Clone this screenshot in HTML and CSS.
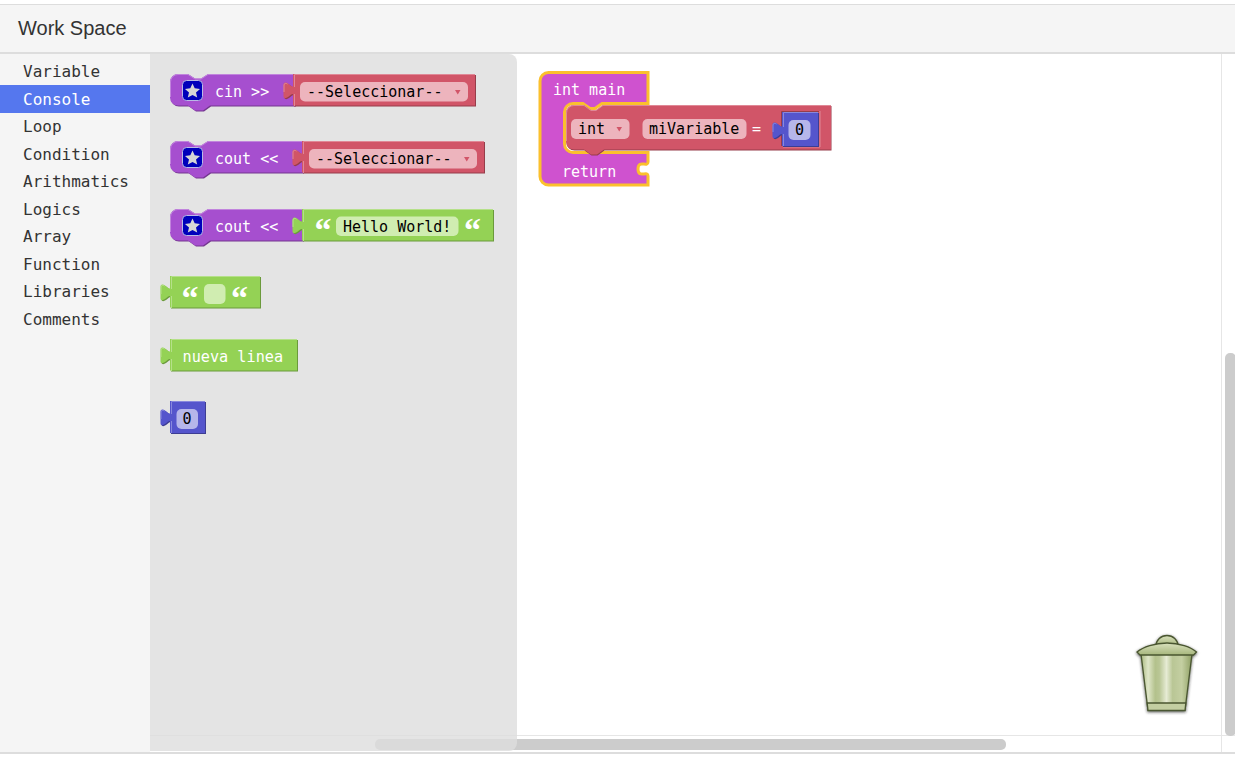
FILE: index.html
```html
<!DOCTYPE html>
<html lang="es">
<head>
<meta charset="utf-8">
<title>Work Space</title>
<link rel="stylesheet" href="styles.css">
</head>
<body>
<main class="panel">
  <header class="panel-heading">Work Space</header>
  <div class="panel-body">
    <nav class="toolbox">
      <div class="cat">Variable</div>
      <div class="cat cat-active">Console</div>
      <div class="cat">Loop</div>
      <div class="cat">Condition</div>
      <div class="cat">Arithmatics</div>
      <div class="cat">Logics</div>
      <div class="cat">Array</div>
      <div class="cat">Function</div>
      <div class="cat">Libraries</div>
      <div class="cat">Comments</div>
    </nav>
    <section class="workspace">
      <div class="track-h"></div>
      <div class="track-v"></div>
      <div class="thumb-h"></div>
      <div class="thumb-v"></div>
      <div class="flyout"></div>
      <svg class="canvas" width="1085" height="698" viewBox="150 54 1085 698" xmlns="http://www.w3.org/2000/svg">
        <defs>
          <path id="pu1" d="M170 82a8 8 0 0 1 8-8h10l7 4.500h6l7-4.500H295V105.500H210l-7 5h-8l-7-5H178a8 8 0 0 1-8-8z"/>
          <path id="pu2" d="M170 149a8 8 0 0 1 8-8h10l7 4.500h6l7-4.500H303V172.500H210l-7 5h-8l-7-5H178a8 8 0 0 1-8-8z"/>
          <path id="pu3" d="M170 217a8 8 0 0 1 8-8h10l7 4.500h6l7-4.500H303V240.500H210l-7 5h-8l-7-5H178a8 8 0 0 1-8-8z"/>
          <path id="re1" d="M293 74H475V105.500H293V94c-2 0-3 1.500-5 3-2 1.500-4.500 2-4.500-1V85c0-3 2.500-3 4.500-1.500 2 1.500 3 3 5 3z"/>
          <path id="re2" d="M302 141H484V172.500H302V161c-2 0-3 1.500-5 3-2 1.500-4.500 2-4.500-1V152c0-3 2.500-3 4.500-1.500 2 1.500 3 3 5 3z"/>
          <path id="gr3" d="M302 209H493V240.500H302V229c-2 0-3 1.500-5 3-2 1.500-4.500 2-4.500-1V220c0-3 2.500-3 4.500-1.500 2 1.500 3 3 5 3z"/>
          <path id="gr4" d="M170 276H260V307.500H170V296c-2 0-3 1.500-5 3-2 1.500-4.500 2-4.500-1V287c0-3 2.500-3 4.500-1.500 2 1.500 3 3 5 3z"/>
          <path id="gr5" d="M170 339H297V370.500H170V359c-2 0-3 1.500-5 3-2 1.500-4.500 2-4.500-1V350c0-3 2.500-3 4.500-1.500 2 1.500 3 3 5 3z"/>
          <path id="bl6" d="M170 401H205V433H170V421c-2 0-3 1.500-5 3-2 1.500-4.500 2-4.500-1V412c0-3 2.500-3 4.500-1.500 2 1.500 3 3 5 3z"/>
          <path id="reMain" d="M566 113a8 8 0 0 1 8-8H584l7 5h5l7-5H831V149.500H604l-7 5h-6l-7-5H574a8 8 0 0 1-8-8z"/>
          <path id="blMain" d="M782 112H818V146H782V134c-2 0-3 1.500-5 3-2 1.500-4.500 2-4.500-1V125c0-3 2.500-3 4.500-1.500 2 1.500 3 3 5 3z"/>
          <linearGradient id="canBody" x1="0" y1="0" x2="1" y2="0">
            <stop offset="0" stop-color="#a8b87e"/>
            <stop offset=".14" stop-color="#dfe6c8"/>
            <stop offset=".28" stop-color="#b3c18c"/>
            <stop offset=".36" stop-color="#b9c695"/>
            <stop offset=".5" stop-color="#e6ebd4"/>
            <stop offset=".62" stop-color="#b9c695"/>
            <stop offset=".8" stop-color="#c4cfa2"/>
            <stop offset="1" stop-color="#8fa064"/>
          </linearGradient>
          <linearGradient id="canLid" x1="0" y1="0" x2="0" y2="1">
            <stop offset="0" stop-color="#d9e1bd"/>
            <stop offset="1" stop-color="#a6b67c"/>
          </linearGradient>
          <filter id="canShadow" x="-30%" y="-30%" width="160%" height="160%">
            <feGaussianBlur in="SourceGraphic" stdDeviation=".45" result="soft"/>
            <feDropShadow in="soft" dx="0" dy="1" stdDeviation="1.600" flood-color="#222" flood-opacity=".75"/>
          </filter>
        </defs>

        <!-- flyout: cin -->
        <use href="#pu1" class="pu-d" transform="translate(1 1)"/>
        <use href="#pu1" class="pu"/>
        <path class="pu-l" d="M170.500 97V82a7.500 7.500 0 0 1 7.500-7.500h10l7 4.500h6l7-4.500H293"/>
        <use href="#re1" class="re-d" transform="translate(1 1)"/>
        <use href="#re1" class="re"/>
        <path class="re-l" d="M294.500 106V94M294.500 87V74.500H475M284 92V85c0-2 2-2 3.500-1"/>
        <rect class="f-re" x="300" y="82" width="168" height="19.500" rx="5"/>
        <text class="code" x="307" y="96.500">--Seleccionar--</text>
        <polygon class="arrow" points="455,90 460.500,90 457.750,94.500"/>
        <rect class="star-box" x="182.500" y="80.500" width="20" height="20" rx="4"/>
        <polygon class="star" points="192.500,83.500 194.700,88.300 200,88.900 196,92.400 197.200,97.500 192.500,94.900 187.800,97.500 189,92.400 185,88.900 190.300,88.300"/>
        <text class="code white" x="215" y="96.500">cin &gt;&gt;</text>

        <!-- flyout: cout select -->
        <use href="#pu2" class="pu-d" transform="translate(1 1)"/>
        <use href="#pu2" class="pu"/>
        <path class="pu-l" d="M170.500 164V149a7.500 7.500 0 0 1 7.500-7.500h10l7 4.500h6l7-4.500H302"/>
        <use href="#re2" class="re-d" transform="translate(1 1)"/>
        <use href="#re2" class="re"/>
        <path class="re-l" d="M303.500 173V161M303.500 154V141.500H484M293 159V152c0-2 2-2 3.500-1"/>
        <rect class="f-re" x="309" y="149" width="168" height="19.500" rx="5"/>
        <text class="code" x="316" y="163.500">--Seleccionar--</text>
        <polygon class="arrow" points="464,157 469.500,157 466.750,161.500"/>
        <g transform="translate(0 67)">
          <rect class="star-box" x="182.500" y="80.500" width="20" height="20" rx="4"/>
          <polygon class="star" points="192.500,83.500 194.700,88.300 200,88.900 196,92.400 197.200,97.500 192.500,94.900 187.800,97.500 189,92.400 185,88.900 190.300,88.300"/>
        </g>
        <text class="code white" x="215" y="163.500">cout &lt;&lt;</text>

        <!-- flyout: cout text -->
        <use href="#pu3" class="pu-d" transform="translate(1 1)"/>
        <use href="#pu3" class="pu"/>
        <path class="pu-l" d="M170.500 232V217a7.500 7.500 0 0 1 7.500-7.500h10l7 4.500h6l7-4.500H302"/>
        <use href="#gr3" class="gr-d" transform="translate(1 1)"/>
        <use href="#gr3" class="gr"/>
        <path class="gr-l" d="M303.500 241V229M303.500 222V209.500H493M293 227V220c0-2 2-2 3.500-1"/>
        <rect class="f-gr" x="336" y="216.500" width="122.500" height="19.500" rx="5"/>
        <text class="code" x="343" y="231.500">Hello World!</text>
        <text class="quote" x="314.500" y="241">“</text>
        <text class="quote" x="464" y="241">“</text>
        <g transform="translate(0 135)">
          <rect class="star-box" x="182.500" y="80.500" width="20" height="20" rx="4"/>
          <polygon class="star" points="192.500,83.500 194.700,88.300 200,88.900 196,92.400 197.200,97.500 192.500,94.900 187.800,97.500 189,92.400 185,88.900 190.300,88.300"/>
        </g>
        <text class="code white" x="215" y="231.500">cout &lt;&lt;</text>

        <!-- flyout: empty string -->
        <use href="#gr4" class="gr-d" transform="translate(1 1)"/>
        <use href="#gr4" class="gr"/>
        <path class="gr-l" d="M171.500 308V296M171.500 289V276.500H260M161 294V287c0-2 2-2 3.500-1"/>
        <rect class="f-gr" x="204" y="284" width="21.500" height="20" rx="5"/>
        <text class="quote" x="181.500" y="309">“</text>
        <text class="quote" x="231" y="309">“</text>

        <!-- flyout: newline -->
        <use href="#gr5" class="gr-d" transform="translate(1 1)"/>
        <use href="#gr5" class="gr"/>
        <path class="gr-l" d="M171.500 371V359M171.500 352V339.500H297M161 357V350c0-2 2-2 3.500-1"/>
        <text class="code wide white" x="182.500" y="361.500">nueva linea</text>

        <!-- flyout: number -->
        <use href="#bl6" class="bl-d" transform="translate(1 1)"/>
        <use href="#bl6" class="bl"/>
        <path class="bl-l" d="M171.500 433V421M171.500 414V401.500H205M161 419V412c0-2 2-2 3.500-1"/>
        <rect class="f-bl" x="176.500" y="409" width="21.500" height="20" rx="5"/>
        <text class="code" x="182.500" y="423.500">0</text>

        <!-- main block -->
        <path class="main" d="M540 81a8.500 8.500 0 0 1 8.500-8.500H648V103.500H602l-7 5h-5l-7-5H573a8.500 8.500 0 0 0-8.500 8.500V144a8.500 8.500 0 0 0 8.500 8.500H648V162c0 6-10-3-10 7s10 1 10 7V185H548.500a8.500 8.500 0 0 1-8.500-8.500z"/>
        <text class="code white" x="553" y="94.500">int main</text>
        <text class="code white" x="562" y="176.500">return</text>

        <use href="#reMain" class="re-d" transform="translate(.5 1)"/>
        <use href="#reMain" class="re"/>
        <path class="re-l" d="M566.500 141V113a7.500 7.500 0 0 1 7.500-7.500H584l7 5h5l7-5H831"/>
        <path class="re-socket-d" d="M781.500 146V111.500H819"/>
        <path class="re-l" d="M820 111V147H783"/>
        <rect class="f-re" x="571" y="119" width="58.500" height="20" rx="5"/>
        <text class="code" x="578" y="133.500">int</text>
        <polygon class="arrow" points="616.500,127 622,127 619.250,131.500"/>
        <rect class="f-re" x="642.500" y="119" width="104" height="20" rx="5"/>
        <text class="code" x="649" y="133.500">miVariable</text>
        <text class="code white" x="752" y="133.500">=</text>
        <use href="#blMain" class="bl-d" transform="translate(1 1)"/>
        <use href="#blMain" class="bl"/>
        <path class="bl-l" d="M783.500 146V134M783.500 127V112.500H818M773 132V125c0-2 2-2 3.500-1"/>
        <rect class="f-bl" x="788.500" y="120" width="22" height="20" rx="5"/>
        <text class="code" x="795" y="134.500">0</text>

        <!-- trash -->
        <g filter="url(#canShadow)">
          <path class="can-edge" fill="url(#canBody)" d="M1141 654H1192L1185 710H1148z"/>
          <path class="can-ring" d="M1147.200 703H1185.800L1185 710.500H1148z"/>
          <path class="can-edge" fill="url(#canLid)" d="M1156 646c0-6 5-10.500 11-10.500s11 4.500 11 10.500z"/>
          <path class="can-edge" fill="url(#canLid)" d="M1137 652c6-5 18-9 30-9s24 4 29.500 9l-3 3H1140z"/>
        </g>
      </svg>
    </section>
  </div>
</main>
</body>
</html>
```

FILE: styles.css
```css
html, body {
  margin: 0;
  height: 100%;
  background: #fff;
  overflow: hidden;
}

body {
  padding-top: 4px;
  box-sizing: border-box;
}

.panel {
  border-top: 1px solid #ddd;
  border-bottom: 2px solid #ddd;
  display: flex;
  flex-direction: column;
}

.panel-heading {
  height: 47px;
  line-height: 46px;
  padding-left: 18px;
  background: #f5f5f5;
  border-bottom: 2px solid #ddd;
  font-family: "Liberation Sans", Arial, sans-serif;
  font-size: 20px;
  color: #333;
}

.panel-body {
  display: flex;
  height: 698px;
}

.toolbox {
  width: 150px;
  flex: none;
  background: #f5f5f5;
  padding-top: 4px;
  box-sizing: border-box;
}

.cat {
  height: 27.5px;
  line-height: 27.5px;
  padding-left: 23px;
  font-family: "DejaVu Sans Mono", monospace;
  font-size: 16px;
  color: #333;
}

.cat-active {
  background: #5577ee;
  box-shadow: 0 -1px 0 #5577ee;
  color: #fff;
}

.workspace {
  position: relative;
  flex: 1;
  background: #fff;
  overflow: hidden;
}

.track-h {
  position: absolute;
  left: 0;
  right: 0;
  top: 681px;
  height: 1px;
  background: #e6e6e6;
}

.track-v {
  position: absolute;
  left: 1071px;
  top: 0;
  bottom: 0;
  width: 1px;
  background: #e6e6e6;
}

.thumb-h {
  position: absolute;
  left: 225px;
  width: 631px;
  top: 685px;
  height: 11px;
  border-radius: 5px;
  background: #ccc;
}

.thumb-v {
  position: absolute;
  left: 1075px;
  width: 11px;
  top: 299px;
  height: 383px;
  border-radius: 5px;
  background: #ccc;
}

.flyout {
  position: absolute;
  left: 0;
  top: 0;
  width: 367px;
  height: 697px;
  border-radius: 0 8px 8px 0;
  background: rgba(221, 221, 221, 0.8);
}

.canvas {
  position: absolute;
  left: 0;
  top: 0;
}

.code {
  font-family: "DejaVu Sans Mono", monospace;
  font-size: 15px;
  fill: #000;
}

.code.wide { font-size: 15.2px; }

.code.white { fill: #fff; }

.quote {
  font-family: "Liberation Serif", serif;
  font-weight: bold;
  font-size: 34px;
  fill: #fff;
}

.pu { fill: #a64fcf; }
.pu-d { fill: #74378f; }
.pu-l { fill: none; stroke: #c184dd; stroke-width: 1; }
.re { fill: #d15568; }
.re-d { fill: #963d4a; }
.re-l { fill: none; stroke: #e08896; stroke-width: 1; }
.re-socket-d { fill: none; stroke: #963d4a; stroke-width: 1; }
.gr { fill: #94d255; }
.gr-d { fill: #6b9a3c; }
.gr-l { fill: none; stroke: #b5e089; stroke-width: 1; }
.bl { fill: #5555cc; }
.bl-d { fill: #3d3d93; }
.bl-l { fill: none; stroke: #8888dd; stroke-width: 1; }

.f-re { fill: #edb4bd; }
.f-gr { fill: #d0edb1; }
.f-bl { fill: #b6b6ea; }
.arrow { fill: #d15568; }

.star-box { fill: #0000bb; stroke: #b9b9e6; stroke-width: 1; }
.star { fill: #d6d6d6; }

.main {
  fill: #cf52cf;
  stroke: #fbc02d;
  stroke-width: 3;
}

.can-edge { stroke: #4a5630; stroke-width: 1.3; }
.can-ring { fill: #c3cea1; stroke: #4a5630; stroke-width: 1.3; }
```
